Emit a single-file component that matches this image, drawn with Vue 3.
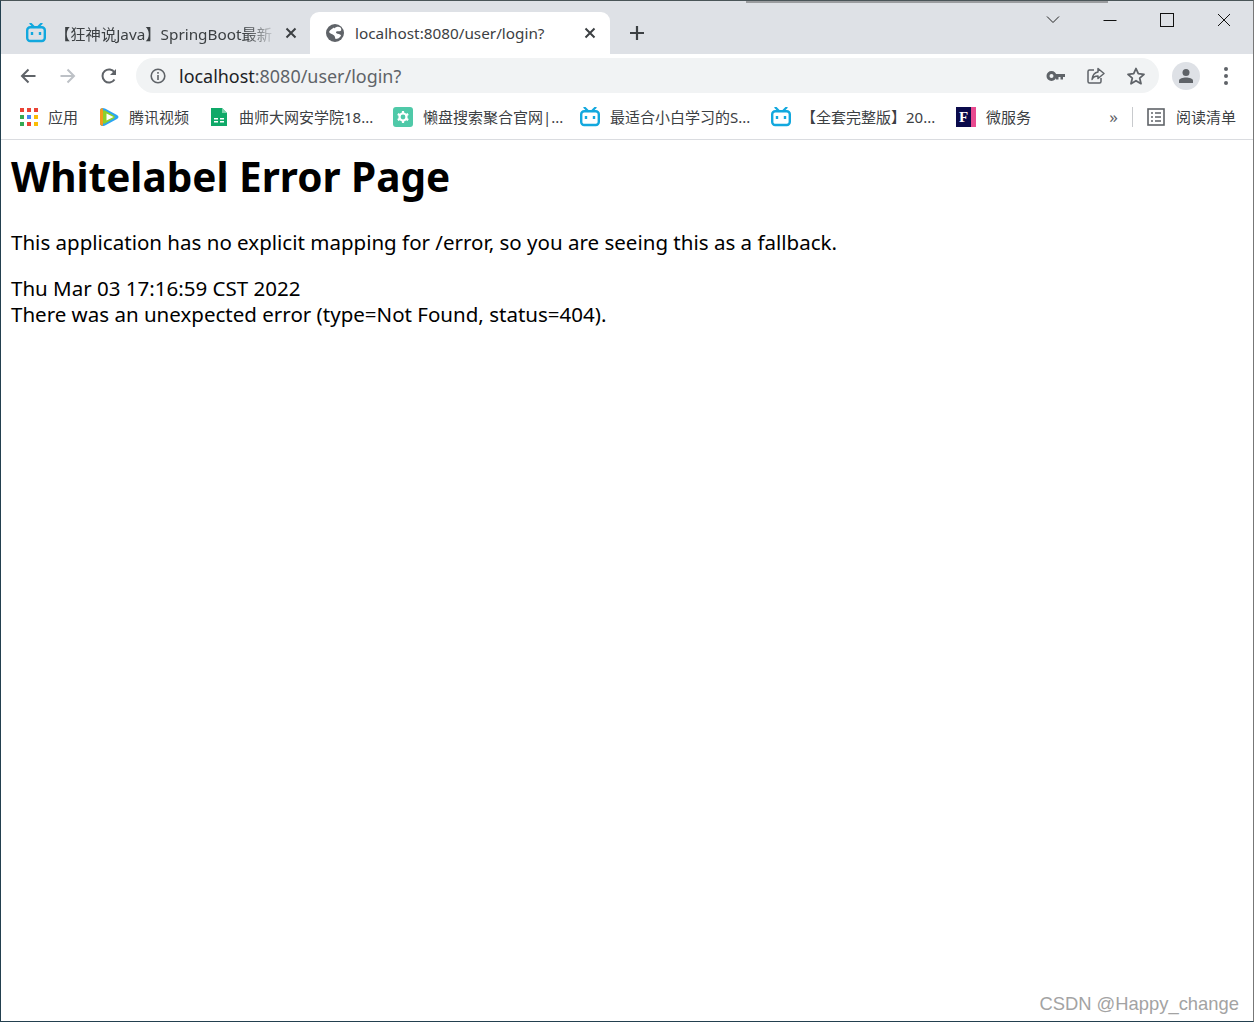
<script setup>
const marks = [
  { icon: 'apps', label: '应用', w: 79 },
  { icon: 'video', label: '腾讯视频', w: 110 },
  { icon: 'sheet', label: '曲师大网安学院18...', w: 184 },
  { icon: 'gear', label: '懒盘搜索聚合官网|...', w: 187 },
  { icon: 'bili', label: '最适合小白学习的S...', w: 191 },
  { icon: 'bili', label: '【全套完整版】20...', w: 185 },
  { icon: 'f', label: '微服务', w: 90 }
]
const appColors = ['#ea4335','#ea4335','#ea4335','#34a853','#4285f4','#fbbc04','#34a853','#ea4335','#fbbc04']
</script>

<template>
  <div class="window">
    <div class="topshadow"></div>
    <header class="tabstrip">
      <div class="tab inactive">
        <svg class="fav" viewBox="0 0 20 20"><path d="M4.500 .5l3.500 3.500M15.500 .5L12 4" stroke="#12a8de" stroke-width="2.200" stroke-linecap="round"/><rect x="1.200" y="4.200" width="17.600" height="13.800" rx="3" fill="none" stroke="#12a8de" stroke-width="2.400"/><path d="M6 9v3M14 9v3" stroke="#12a8de" stroke-width="2.400"/></svg>
        <span class="title fade">【狂神说Java】SpringBoot最新</span>
        <svg class="close" viewBox="0 0 12 12"><path d="M1.500 1.500l9 9M10.500 1.500l-9 9" stroke="#3c4043" stroke-width="2"/></svg>
      </div>
      <div class="tab active">
        <svg class="fav globe" viewBox="0 0 18 18"><circle cx="9" cy="9" r="9" fill="#5f6368"/><path d="M8 4.500c2-2 5-2.500 6.500-1 1 1.500 1 3 0 3.500-1.500.5-3 0-4 .5-1 .5-.5 2 1 2.200 2 .3 3.500.8 3.500 2-1 2-3.500 3.300-5.500 3.300-.5-1.500-.5-3-2-4-1.500-1-3.500-1.500-4.500-3 1-2.500 3-3 5-4.500z" fill="#fff"/></svg>
        <span class="title">localhost:8080/user/login?</span>
        <svg class="close" viewBox="0 0 12 12"><path d="M1.500 1.500l9 9M10.500 1.500l-9 9" stroke="#3c4043" stroke-width="2"/></svg>
      </div>
      <svg class="newtab" viewBox="0 0 16 16"><path d="M8 1v14M1 8h14" stroke="#3c4043" stroke-width="2.200"/></svg>
      <div class="winbtns">
        <svg class="wb" viewBox="0 0 14 14"><path d="M1 3.500l6 6 6-6" fill="none" stroke="#222" stroke-width="1"/></svg>
        <svg class="wb" viewBox="0 0 14 14"><path d="M0.500 7.500h13" stroke="#111" stroke-width="1"/></svg>
        <svg class="wb" viewBox="0 0 14 14"><rect x=".5" y=".5" width="13" height="13" fill="none" stroke="#111" stroke-width="1"/></svg>
        <svg class="wb" viewBox="0 0 14 14"><path d="M1 1l12 12M13 1L1 13" stroke="#111" stroke-width="1"/></svg>
      </div>
    </header>

    <nav class="toolbar">
      <svg class="tool" viewBox="0 0 18 18"><path d="M16.500 9H3M9.500 2.500L3 9l6.500 6.500" fill="none" stroke="#5f6368" stroke-width="2"/></svg>
      <svg class="tool" viewBox="0 0 18 18"><path d="M1.500 9H15M8.500 2.500L15 9l-6.500 6.500" fill="none" stroke="#bdc1c6" stroke-width="2"/></svg>
      <svg class="tool" viewBox="-1 0 18 18"><path d="M14.500 12.500A6.500 6.500 0 1 1 14.500 5.500" fill="none" stroke="#5f6368" stroke-width="2"/><path d="M16 2v6h-6z" fill="#5f6368"/></svg>
      <div class="omnibox">
        <svg class="info" viewBox="0 0 16 16"><circle cx="8" cy="8" r="6.800" fill="none" stroke="#5f6368" stroke-width="1.600"/><path d="M8 7v5M8 4v1.800" stroke="#5f6368" stroke-width="1.600"/></svg>
        <span class="url"><b>localhost</b>:8080/user/login?</span>
        <svg class="omni-ic" viewBox="0 0 20 20"><circle cx="5.500" cy="10" r="3.500" fill="none" stroke="#5f6368" stroke-width="3"/><path d="M8 8h11v3h-2v2.500h-2.500V11H12.500v2.500H10V11H8z" fill="#5f6368"/></svg>
        <svg class="omni-ic" viewBox="0 0 20 20"><path d="M8 4H3.500A1.500 1.500 0 0 0 2 5.500v10A1.500 1.500 0 0 0 3.500 17h10a1.500 1.500 0 0 0 1.500-1.500V12" fill="none" stroke="#5f6368" stroke-width="1.500"/><path d="M12 2.500l6 5-6 5V10c-3 0-5 1-6 3.500C6.500 9.500 8.500 6.500 12 6z" fill="none" stroke="#5f6368" stroke-width="1.500" stroke-linejoin="round"/></svg>
        <svg class="omni-ic" viewBox="0 0 20 20"><path d="M10 2.500l2.300 5.200 5.700.6-4.300 3.800 1.300 5.600-5-3-5 3 1.300-5.600L2 8.300l5.700-.6z" fill="none" stroke="#5f6368" stroke-width="1.800" stroke-linejoin="round"/></svg>
      </div>
      <div class="avatar">
        <svg viewBox="0 0 16 16" width="16" height="16"><circle cx="8" cy="4.500" r="3.500" fill="#5f6368"/><path d="M1 15v-2.500C1 10.500 5 9.500 8 9.500s7 1 7 3V15z" fill="#5f6368"/></svg>
      </div>
      <div class="kebab"><i></i><i></i><i></i></div>
    </nav>

    <div class="bookmarks">
      <div v-for="m in marks" :key="m.label" class="mark" :style="{ width: m.w + 'px' }">
        <span v-if="m.icon === 'apps'" class="apps"><i v-for="(c, n) in appColors" :key="n" :style="{ background: c }"></i></span>
        <svg v-else-if="m.icon === 'video'" class="mi" viewBox="0 0 20 20"><path d="M1 4C1 .8 3.500 .3 6 1.500l12 6.500c2 1.200 2 2.800 0 4L6 18.500C3.500 19.700 1 19.200 1 16z" fill="#2aa5f2"/><path d="M1 4C1 1.500 2.500 1 4 1.500v17C2.500 19 1 18.500 1 16z" fill="#f39a1f"/><path d="M4 4.500C4 3.500 5 3 6 3.500l9 5.200c1 .6 1 2 0 2.600l-9 5.200c-1 .5-2 0-2-1z" fill="#8bd12c"/><path d="M7.500 6.500l7 3.500-7 3.500z" fill="#fff"/></svg>
        <svg v-else-if="m.icon === 'sheet'" class="mi" viewBox="0 0 20 20"><path d="M2 1h11l5 5v13H2z" fill="#0fa968"/><path d="M13 1l5 5h-5z" fill="#7fd4ae"/><path d="M5 11h4v1.500H5zM11 11h4v1.500h-4zM5 14h4v1.500H5zM11 14h4v1.500h-4z" fill="#fff"/></svg>
        <svg v-else-if="m.icon === 'gear'" class="mi" viewBox="0 0 20 20"><rect width="20" height="20" rx="3" fill="#4fc9a8"/><circle cx="10" cy="10" r="3.500" fill="none" stroke="#fff" stroke-width="2.200"/><path d="M10 4v2.500M10 13.500V16M4.800 7l2.200 1.300M13 11.700l2.200 1.300M4.800 13l2.200-1.300M13 8.300L15.200 7" stroke="#fff" stroke-width="2.200"/></svg>
        <svg v-else-if="m.icon === 'bili'" class="mi" viewBox="0 0 20 20"><path d="M4.500 .5l3.500 3.500M15.500 .5L12 4" stroke="#12a8de" stroke-width="2.200" stroke-linecap="round"/><rect x="1.200" y="4.200" width="17.600" height="13.800" rx="3" fill="none" stroke="#12a8de" stroke-width="2.400"/><path d="M6 9v3M14 9v3" stroke="#12a8de" stroke-width="2.400"/></svg>
        <span v-else class="flogo"><span class="fl">F</span><span class="fb"></span></span>
        <span class="mlabel">{{ m.label }}</span>
      </div>
      <div class="mark-end">
        <span class="more">»</span>
        <span class="sep"></span>
        <svg class="mi list" viewBox="0 0 18 18"><rect x="1" y="1" width="16" height="16" fill="none" stroke="#5f6368" stroke-width="1.600"/><path d="M4 5h2M8 5h6M4 9h2M8 9h6M4 13h2M8 13h6" stroke="#5f6368" stroke-width="1.500"/></svg>
        <span class="mlabel">阅读清单</span>
      </div>
    </div>

    <main class="page">
      <h1>Whitelabel Error Page</h1>
      <p>This application has no explicit mapping for /error, so you are seeing this as a fallback.</p>
      <div>Thu Mar 03 17:16:59 CST 2022</div>
      <div>There was an unexpected error (type=Not Found, status=404).</div>
    </main>
    <div class="watermark">CSDN @Happy_change</div>
  </div>
</template>

<style scoped>
.window {
  position: relative;
  box-sizing: border-box;
  height: 1022px;
  overflow: hidden;
  background: #fff;
  border: 1px solid #23404f;
  border-top-color: #4a5558;
  border-right-color: #777;
  font-family: "Noto Sans", "Noto Sans CJK SC", sans-serif;
}
.topshadow {
  position: absolute;
  top: 0; left: 745px;
  width: 362px; height: 2px;
  background: #9a9c9f;
}
.tabstrip {
  display: flex;
  align-items: flex-end;
  height: 53px;
  background: #dee1e6;
  box-sizing: border-box;
  padding-left: 11px;
}
.tab {
  display: flex;
  align-items: center;
  height: 42px;
  box-sizing: border-box;
  font-size: 15.300px;
  color: #3c4043;
}
.inactive { width: 298px; padding-left: 14px; }
.active {
  width: 300px;
  padding-left: 16px;
  background: #fff;
  border-radius: 9px 9px 0 0;
}
.fav { width: 20px; height: 20px; flex: none; }
.globe { width: 18px; height: 18px; }
.title {
  flex: none;
  white-space: nowrap;
}
.inactive .title { width: 222px; margin-left: 9px; }
.active .title { width: 221px; margin-left: 11px; }
.fade {
  -webkit-mask-image: linear-gradient(90deg, #000 86%, transparent);
  mask-image: linear-gradient(90deg, #000 86%, transparent);
}
.close { width: 12px; height: 12px; flex: none; margin-left: 8px; }
.newtab { width: 16px; height: 16px; margin: 0 0 13px 19px; flex: none; }
.winbtns {
  display: flex;
  align-self: flex-start;
  margin-left: auto;
  padding-top: 12px;
  padding-right: 22px;
  gap: 43px;
}
.wb { width: 14px; height: 14px; }
.toolbar {
  display: flex;
  align-items: center;
  height: 43px;
  padding-left: 18px;
  box-sizing: border-box;
}
.tool { width: 18px; height: 18px; margin-right: 22px; flex: none; }
.omnibox {
  display: flex;
  align-items: center;
  width: 1023px;
  height: 35px;
  margin-left: -3px;
  padding-left: 14px;
  box-sizing: border-box;
  background: #f1f3f4;
  border-radius: 18px;
}
.info { width: 16px; height: 16px; flex: none; }
.url {
  flex: 1;
  margin-left: 13px;
  font-size: 17.950px;
  color: #5f6368;
}
.url b { font-weight: 400; color: #202124; }
.omni-ic { width: 20px; height: 20px; margin-right: 20px; flex: none; }
.omni-ic:last-child { margin-right: 13px; }
.avatar {
  display: flex;
  align-items: center;
  justify-content: center;
  width: 28px; height: 28px;
  margin-left: 13px;
  border-radius: 50%;
  background: #dee1e6;
}
.kebab {
  display: flex;
  flex-direction: column;
  gap: 3px;
  margin-left: 24px;
}
.kebab i { width: 4px; height: 4px; border-radius: 50%; background: #5f6368; }
.bookmarks {
  display: flex;
  align-items: center;
  height: 43px;
  padding-left: 19px;
  padding-bottom: 3px;
  box-sizing: border-box;
  border-bottom: 1px solid #dadce0;
}
.mark { display: flex; align-items: center; flex: none; gap: 10px; }
.mi { width: 20px; height: 20px; flex: none; }
.mlabel {
  font-size: 15px;
  color: #3c4043;
  white-space: nowrap;
}
.apps {
  display: grid;
  grid-template-columns: repeat(3, 4px);
  gap: 3px 3px;
  flex: none;
  width: 18px;
}
.apps i { width: 4px; height: 4px; }
.flogo {
  display: flex;
  width: 20px; height: 20px;
  flex: none;
  background: #0b0b4b;
}
.fl {
  flex: 1;
  color: #fff;
  font: 700 15px/20px "Liberation Serif", serif;
  text-align: center;
}
.fb { width: 5px; background: #e84a8f; }
.mark-end {
  display: flex;
  align-items: center;
  margin-left: auto;
  padding-right: 17px;
}
.more { font-size: 17px; color: #5f6368; }
.sep { width: 1px; height: 20px; background: #c8cacd; margin: 0 14px 0 14px; }
.list { width: 18px; height: 18px; margin-right: 11px; }
.page {
  padding: 0 10px;
  font-size: 20.520px;
  color: #000;
  line-height: 26px;
}
h1 {
  margin: 0;
  padding-top: 12px;
  font-size: 40.500px;
  line-height: 50px;
  font-weight: 700;
}
p { margin: 27px 0 20px; }
.watermark {
  position: absolute;
  right: 14px;
  bottom: 6px;
  font: 18.400px "Liberation Sans", sans-serif;
  color: #a3a3a3;
}
</style>
